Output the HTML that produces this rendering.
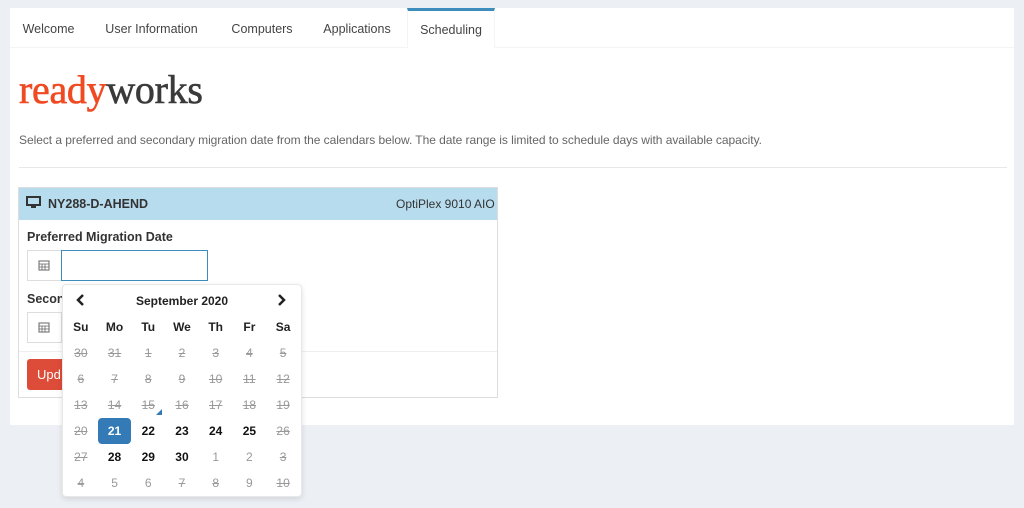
<!DOCTYPE html>
<html><head><style>
*{box-sizing:border-box}
body{margin:0;width:1024px;height:508px;background:#ecf0f5;font-family:"Liberation Sans",sans-serif;position:relative;overflow:hidden;color:#333}
.abs{position:absolute}
.panel{left:10px;top:8px;width:1004px;height:417px;background:#fff}
.tabs{left:10px;top:8px;width:1004px;height:40px;border-bottom:1px solid #f4f4f4}
.tab{position:absolute;top:0;height:40px;line-height:42px;font-size:12.5px;color:#444;text-align:center}
.tab.act{border-top:3px solid #3c8dbc;border-left:1px solid #f4f4f4;border-right:1px solid #f4f4f4;line-height:38px;background:#fff;height:40px}
.logo{left:19px;top:66px;font-family:"Liberation Serif",serif;font-size:40px;letter-spacing:-0.3px;-webkit-text-stroke:0.6px}
.txt{left:19px;top:133px;font-size:12px;color:#666;letter-spacing:-0.05px}
.hr{left:19px;top:167px;width:988px;height:1px;background:#e8e8e8}
.box{left:18px;top:187px;width:480px;height:211px;border:1px solid #ddd}
.bh{left:19px;top:188px;width:478px;height:32px;background:#b7dcee}
.lbl{font-size:12.5px;font-weight:bold;color:#333}
.addon{border:1px solid #ddd;background:#fff}
.dp{left:62px;top:284px;width:240px;height:213px;background:#fff;border:1px solid #e8e8e8;border-radius:4px;box-shadow:0 2px 6px rgba(0,0,0,.12)}
table{border-collapse:collapse;position:absolute;left:1px;top:29px;width:236px}
td,th{width:33.7px;height:26px;text-align:center;font-size:12px;padding:0}
th{font-weight:bold;color:#222}
td.o{color:#999;text-decoration:line-through}
td.n{color:#999}
td.b{font-weight:bold;color:#111}
td.s{background:#337ab7;color:#fff;font-weight:bold;border-radius:4px}
</style></head><body>
<div class="abs panel"></div>
<div class="abs tabs">
<div class="tab" style="left:0;width:77px">Welcome</div>
<div class="tab" style="left:77px;width:129px">User Information</div>
<div class="tab" style="left:206px;width:92px">Computers</div>
<div class="tab" style="left:298px;width:98px">Applications</div>
<div class="tab act" style="left:397px;width:88px">Scheduling</div>
</div>
<div class="abs logo"><span style="color:#f04a23">ready</span><span style="color:#3a3a3a">works</span></div>
<div class="abs txt">Select a preferred and secondary migration date from the calendars below. The date range is limited to schedule days with available capacity.</div>
<div class="abs hr"></div>
<div class="abs box"></div>
<div class="abs bh"></div>
<svg class="abs" style="left:26px;top:196px" width="15" height="13" viewBox="0 0 15 13"><rect x="1" y="1" width="13" height="8" fill="none" stroke="#333" stroke-width="2"/><rect x="5" y="10" width="5" height="2" fill="#333"/></svg>
<div class="abs lbl" style="left:48px;top:197px">NY288-D-AHEND</div>
<div class="abs" style="left:396px;top:197px;font-size:12px;color:#333">OptiPlex 9010 AIO</div>
<div class="abs lbl" style="left:27px;top:230px">Preferred Migration Date</div>
<div class="abs addon" style="left:27px;top:250px;width:35px;height:31px"></div>
<div class="abs" style="left:61px;top:250px;width:147px;height:31px;border:1px solid #3c8dbc"></div>
<div class="abs lbl" style="left:27px;top:292px">Second</div>
<div class="abs addon" style="left:27px;top:312px;width:35px;height:31px"></div>
<svg class="abs" style="left:38px;top:259px" width="12" height="12" viewBox="0 0 12 12"><rect x="1" y="2" width="10" height="9" fill="none" stroke="#666"/><path d="M1 5h10M4 5v6M7 5v6M1 8h10" stroke="#666" stroke-width=".8"/></svg>
<svg class="abs" style="left:38px;top:321px" width="12" height="12" viewBox="0 0 12 12"><rect x="1" y="2" width="10" height="9" fill="none" stroke="#666"/><path d="M1 5h10M4 5v6M7 5v6M1 8h10" stroke="#666" stroke-width=".8"/></svg>
<div class="abs" style="left:19px;top:351px;width:478px;height:1px;background:#eee"></div>
<div class="abs" style="left:27px;top:359px;width:40px;height:31px;background:#dd4b39;border-radius:3px;color:#fff;font-size:13px;line-height:31px;padding-left:10px">Upd</div>
<div class="abs dp">
<svg class="abs" style="left:12px;top:9px" width="10" height="12" viewBox="0 0 10 12"><path d="M8 1L3 6l5 5" fill="none" stroke="#222" stroke-width="2.5"/></svg>
<div class="abs" style="left:0;width:238px;top:9px;text-align:center;font-size:12px;font-weight:bold;color:#222">September 2020</div>
<svg class="abs" style="left:214px;top:9px" width="10" height="12" viewBox="0 0 10 12"><path d="M2 1l5 5-5 5" fill="none" stroke="#222" stroke-width="2.5"/></svg>
<table>
<tr><th>Su</th><th>Mo</th><th>Tu</th><th>We</th><th>Th</th><th>Fr</th><th>Sa</th></tr>
<tr><td class="o">30</td><td class="o">31</td><td class="o">1</td><td class="o">2</td><td class="o">3</td><td class="o">4</td><td class="o">5</td></tr>
<tr><td class="o">6</td><td class="o">7</td><td class="o">8</td><td class="o">9</td><td class="o">10</td><td class="o">11</td><td class="o">12</td></tr>
<tr><td class="o">13</td><td class="o">14</td><td class="o" style="position:relative">15<span style="position:absolute;right:3px;bottom:3px;width:0;height:0;border-left:6px solid transparent;border-bottom:6px solid #337ab7"></span></td><td class="o">16</td><td class="o">17</td><td class="o">18</td><td class="o">19</td></tr>
<tr><td class="o">20</td><td class="s">21</td><td class="b">22</td><td class="b">23</td><td class="b">24</td><td class="b">25</td><td class="o">26</td></tr>
<tr><td class="o">27</td><td class="b">28</td><td class="b">29</td><td class="b">30</td><td class="n">1</td><td class="n">2</td><td class="o">3</td></tr>
<tr><td class="o">4</td><td class="n">5</td><td class="n">6</td><td class="o">7</td><td class="o">8</td><td class="n">9</td><td class="o">10</td></tr>
</table>
</div>
</body></html>
